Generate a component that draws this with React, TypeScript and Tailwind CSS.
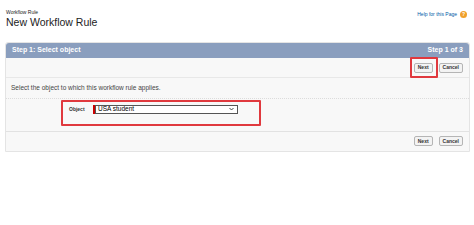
import React from 'react'

function SmallButton({ label }: { label: string }) {
  return (
    <button className="h-[10px] px-[3px] border border-[#b5b5b5] rounded-[2px] bg-[#f3f3f3] text-[5px] font-bold text-[#333] leading-none">
      {label}
    </button>
  )
}

function ButtonRow({ highlight }: { highlight?: boolean }) {
  return (
    <div className="flex justify-end items-center gap-[6px] pr-[6px]">
      <div className="relative flex">
        <SmallButton label="Next" />
        {highlight && (
          <span className="absolute -left-[4px] -right-[5px] -top-[6px] -bottom-[5px] border-2 border-[#e0393e] rounded-[1px]" />
        )}
      </div>
      <SmallButton label="Cancel" />
    </div>
  )
}

export default function App() {
  return (
    <div className="w-[474px] h-[225px] bg-white font-['Liberation_Sans',Arial,sans-serif] text-[#222]">
      {/* Page title */}
      <div className="flex justify-between items-start px-[6px] pt-[9px]">
        <div>
          <div className="text-[5px] leading-[6px]">Workflow Rule</div>
          <div className="text-[10.5px] leading-[13px] mt-[1px]">New Workflow Rule</div>
        </div>
        <div className="flex items-center gap-[3px] mt-[2px] pr-[1px]">
          <span className="text-[5px] text-[#015ba7]">Help for this Page</span>
          <span className="w-[7px] h-[7px] rounded-full bg-[#f0a02b] text-white text-[5px] font-bold flex items-center justify-center leading-none">
            ?
          </span>
        </div>
      </div>

      {/* Wizard panel */}
      <div className="ml-[5px] mt-[13px] w-[465px] bg-[#f8f8f8] border border-[#e4e4e4] rounded-t-[3px]">
        <div className="h-[15px] bg-[#8a9ebe] rounded-t-[3px] flex items-center justify-between px-[6px] text-white font-bold text-[7px]">
          <span>Step 1: Select object</span>
          <span>Step 1 of 3</span>
        </div>

        <div className="h-[20px] flex items-center justify-end border-b border-[#e8e8e8]">
          <ButtonRow highlight />
        </div>

        <div className="px-[5px] pt-[5px] pb-[5px] border-b border-dotted border-[#dcdcdc] text-[6.5px] text-[#444]">
          Select the object to which this workflow rule applies.
        </div>

        <div className="pl-[55px] pt-[1px] pb-[5px] border-b border-[#e2e2e2]">
          <div className="w-[200px] h-[26px] border-2 border-[#e0393e] rounded-[1px] flex items-start pt-[3px] pl-[6px]">
            <span className="text-[5px] font-bold text-[#333] w-[24px] pt-[1px]">Object</span>
            <div className="flex h-[9px]">
              <span className="w-[2px] bg-[#c00]" />
              <div className="w-[143px] border border-[#555] bg-white flex items-center justify-between pl-[2px] pr-[3px]">
                <span className="text-[6.5px] leading-none text-black">USA student</span>
                <svg width="5" height="4" viewBox="0 0 10 6" fill="none" stroke="#333" strokeWidth="1.8">
                  <path d="M1 1l4 4 4-4" />
                </svg>
              </div>
            </div>
          </div>
        </div>

        <div className="h-[19px] flex items-center justify-end">
          <ButtonRow />
        </div>
      </div>
    </div>
  )
}
